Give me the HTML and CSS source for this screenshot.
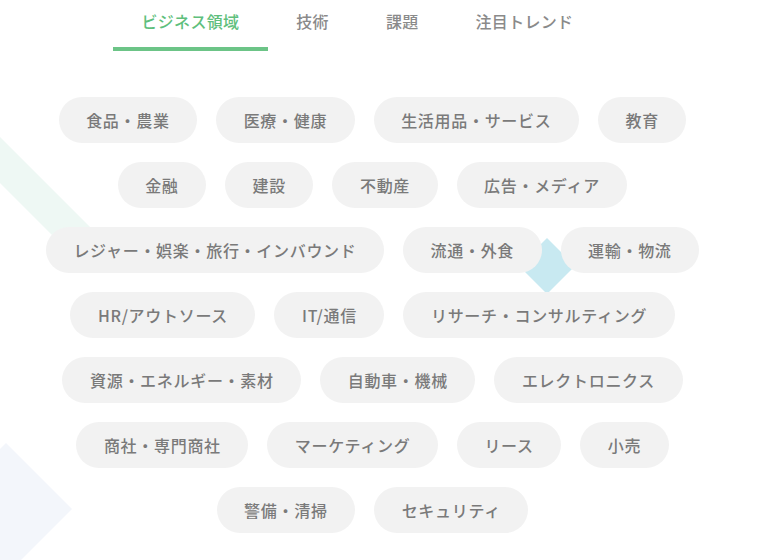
FILE: index.html
```html
<!DOCTYPE html>
<html lang="ja">
<head>
<meta charset="utf-8">
<title>ビジネス領域</title>
<link rel="stylesheet" href="styles.css">
</head>
<body>
<div class="page">
  <svg class="deco" width="768" height="560" viewBox="0 0 768 560" aria-hidden="true">
    <polygon points="-40,97 113,250 67,250 -40,143" fill="#eef8f4"/>
    <polygon points="547,238 575,266 547,294 519,266" fill="#c8e9f1"/>
    <polygon points="6,443 72,509 6,575 -60,509" fill="#f3f6fb"/>
  </svg>
  <nav class="tabs">
    <a class="tab active">ビジネス領域</a>
    <a class="tab">技術</a>
    <a class="tab">課題</a>
    <a class="tab">注目トレンド</a>
  </nav>
  <ul class="tags">
    <li class="tag">食品・農業</li>
    <li class="tag">医療・健康</li>
    <li class="tag">生活用品・サービス</li>
    <li class="tag">教育</li>
    <li class="tag">金融</li>
    <li class="tag">建設</li>
    <li class="tag">不動産</li>
    <li class="tag">広告・メディア</li>
    <li class="tag">レジャー・娯楽・旅行・インバウンド</li>
    <li class="tag">流通・外食</li>
    <li class="tag">運輸・物流</li>
    <li class="tag">HR/アウトソース</li>
    <li class="tag">IT/通信</li>
    <li class="tag">リサーチ・コンサルティング</li>
    <li class="tag">資源・エネルギー・素材</li>
    <li class="tag">自動車・機械</li>
    <li class="tag">エレクトロニクス</li>
    <li class="tag">商社・専門商社</li>
    <li class="tag">マーケティング</li>
    <li class="tag">リース</li>
    <li class="tag">小売</li>
    <li class="tag">警備・清掃</li>
    <li class="tag">セキュリティ</li>
  </ul>
</div>
</body>
</html>
```

FILE: styles.css
```css
html, body {
  margin: 0;
  padding: 0;
  background: #ffffff;
}
body {
  font-family: "Noto Sans CJK JP", "Noto Sans", sans-serif;
  font-weight: 500;
  font-size: 16px;
  letter-spacing: 0.7px;
}
.page {
  position: relative;
  width: 768px;
  height: 560px;
  overflow: hidden;
}
.deco {
  position: absolute;
  left: 0;
  top: 0;
  z-index: 0;
}
.tabs {
  position: relative;
  z-index: 1;
  display: flex;
  padding-left: 113px;
}
.tab {
  display: block;
  padding: 9px 28.5px 14px;
  line-height: 24px;
  letter-spacing: 0.3px;
  color: #8a8a8a;
  border-bottom: 4px solid transparent;
}
.tab.active {
  color: #5fbf7d;
  border-bottom-color: #6cc487;
}
.tags {
  position: relative;
  z-index: 1;
  list-style: none;
  margin: 46px 0 0 22px;
  padding: 0;
  width: 701px;
  display: flex;
  flex-wrap: wrap;
  justify-content: center;
  gap: 19px;
}
.tag {
  padding: 11px 27.5px;
  line-height: 24px;
  background: #f2f2f2;
  color: #7a7a7a;
  border-radius: 23px;
  white-space: nowrap;
}
```
